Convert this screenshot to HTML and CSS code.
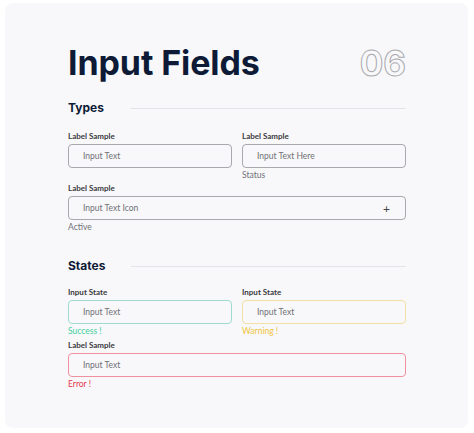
FILE: index.html
```html
<!DOCTYPE html>
<html lang="en">
<head>
    <meta charset="UTF-8">
    <title>Input Fields</title>
    <link rel="stylesheet" href="styles.css">
</head>
<body>
    <div class="card">
        <div class="header">
            <h1 class="title">Input Fields</h1>
            <div class="number">06</div>
        </div>

        <div class="section-head">
            <h2>Types</h2>
            <div class="rule"></div>
        </div>

        <div class="row">
            <div class="field">
                <div class="label">Label Sample</div>
                <div class="input">Input Text</div>
            </div>
            <div class="field">
                <div class="label">Label Sample</div>
                <div class="input">Input Text Here</div>
                <div class="hint">Status</div>
            </div>
        </div>
        <div class="field wide">
            <div class="label">Label Sample</div>
            <div class="input with-icon"><span>Input Text Icon</span><span class="plus">+</span></div>
            <div class="hint">Active</div>
        </div>

        <div class="section-head states">
            <h2>States</h2>
            <div class="rule"></div>
        </div>

        <div class="row states-row">
            <div class="field">
                <div class="label">Input State</div>
                <div class="input success">Input Text</div>
                <div class="hint success-text">Success !</div>
            </div>
            <div class="field">
                <div class="label">Input State</div>
                <div class="input warning">Input Text</div>
                <div class="hint warning-text">Warning !</div>
            </div>
        </div>
        <div class="field wide error-field">
            <div class="label">Label Sample</div>
            <div class="input error">Input Text</div>
            <div class="hint error-text">Error !</div>
        </div>
    </div>
</body>
</html>
```

FILE: styles.css
```css
body {
    margin: 0;
    background: #ffffff;
    font-family: Lato, "Noto Sans", sans-serif;
}

.card {
    margin: 3px 0 0 5px;
    width: 463px;
    height: 425px;
    box-sizing: border-box;
    background: #f8f8fa;
    border-radius: 8px;
    padding: 40px 62px 0 63px;
}

.header {
    display: flex;
    justify-content: space-between;
    align-items: center;
}

.title {
    margin: 0;
    font-family: Inter, sans-serif;
    font-weight: 700;
    font-size: 34px;
    line-height: 40px;
    letter-spacing: -0.1px;
    color: #0e1b36;
}

.number {
    font-family: Inter, sans-serif;
    font-weight: 700;
    font-size: 35px;
    line-height: 40px;
    color: transparent;
    -webkit-text-stroke: 1px #a9a9ad;
}

.section-head {
    display: flex;
    align-items: center;
    gap: 26px;
    margin-top: 15px;
}

.section-head.states {
    margin-top: 23px;
}

.section-head h2 {
    margin: 0;
    font-family: Inter, sans-serif;
    font-weight: 700;
    font-size: 12px;
    line-height: 20px;
    color: #0e1b36;
}

.rule {
    flex: 1;
    height: 1px;
    background: #e3e3e8;
}

.row {
    display: flex;
    gap: 10px;
    margin-top: 12px;
}

.row.states-row {
    margin-top: 10px;
}

.row .field {
    flex: 1;
}

.field.wide {
    margin-top: 1px;
}

.field.error-field {
    margin-top: 2px;
}

.label {
    font-size: 8px;
    line-height: 12px;
    font-weight: 700;
    color: #3a3a40;
    margin-bottom: 2px;
}

.input {
    height: 24px;
    box-sizing: border-box;
    border: 1px solid #a8a8ad;
    border-radius: 4px;
    padding: 0 14px;
    display: flex;
    align-items: center;
    font-size: 8.5px;
    color: #707076;
}

.with-icon {
    justify-content: space-between;
    padding-right: 15px;
}

.plus {
    font-size: 12px;
    color: #444;
}

.hint {
    font-size: 8.5px;
    line-height: 12px;
    color: #707076;
    margin-top: 1px;
}

.input.success {
    border-color: #9fdccf;
}

.input.warning {
    border-color: #f2e0a6;
}

.input.error {
    border-color: #f0909e;
}

.success-text {
    color: #3fcf9a;
}

.warning-text {
    color: #efc43c;
}

.error-text {
    color: #e4384e;
}
```
